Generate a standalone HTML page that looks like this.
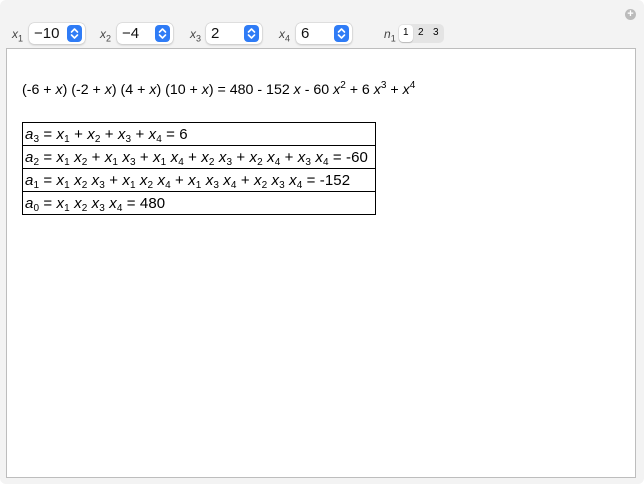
<!DOCTYPE html><html><head><style>
body{margin:0;width:644px;height:486px;background:#fff;font-family:"Liberation Sans",sans-serif;position:relative;overflow:hidden}
.outer{position:absolute;left:0;top:0;width:644px;height:484px;background:#f3f3f3;border-radius:6px}
.panel{position:absolute;left:6px;top:48px;width:630px;height:430px;background:#fff;border:1px solid #bdbdbd;box-sizing:border-box}
.lab{position:absolute;top:27px;font-size:12px;font-style:italic;color:#444}
.lab sub{font-size:9px;font-style:normal}
.pop{position:absolute;top:23px;height:21px;width:56px;background:#fff;border-radius:5px;box-shadow:0 0 0 .5px #ccc,0 1px 2px rgba(0,0,0,.2);font-size:15px;line-height:21px;padding-left:5px;box-sizing:border-box;color:#111}
.st{position:absolute;right:3px;top:2px;width:15px;height:17px;background:#2f7cf6;border-radius:4px}
.seg{position:absolute;left:398px;top:24px;width:46px;height:19px;background:#e4e4e4;border-radius:5px;font-size:10px}
.seg span{position:absolute;top:3px}
.eq{position:absolute;left:22px;top:82px;font-size:14.2px;color:#000;white-space:nowrap}
i{font-style:italic}
sup{font-size:10px;vertical-align:6px;line-height:0}
.eq sub,table sub{font-size:10px;vertical-align:-3px;line-height:0}
table{position:absolute;left:22px;top:122px;border-collapse:collapse;width:354px;font-size:15px}
td{border:1px solid #000;height:22px;padding:0 0 0 2px;white-space:nowrap;line-height:21px;letter-spacing:.1px}
</style></head><body>
<div class="outer"></div>
<div style="position:absolute;left:625px;top:9px;width:11px;height:11px;border-radius:50%;background:#bbb;color:#fff;font-size:11px;line-height:11px;text-align:center;font-weight:bold">+</div>
<svg width="0" height="0" style="position:absolute"><defs><g id="ar"><path d="M4.5 7 L7.5 4 L10.5 7 M4.5 10 L7.5 13 L10.5 10" stroke="#fff" stroke-width="1.6" fill="none" stroke-linecap="round" stroke-linejoin="round"/></g></defs></svg>
<div class="lab" style="left:12px">x<sub>1</sub></div>
<div class="pop" style="left:29px">−10<svg class="st" viewBox="0 0 15 17"><use href="#ar"/></svg></div>
<div class="lab" style="left:100px">x<sub>2</sub></div>
<div class="pop" style="left:117px">−4<svg class="st" viewBox="0 0 15 17"><use href="#ar"/></svg></div>
<div class="lab" style="left:190px">x<sub>3</sub></div>
<div class="pop" style="left:206px">2<svg class="st" viewBox="0 0 15 17"><use href="#ar"/></svg></div>
<div class="lab" style="left:279px">x<sub>4</sub></div>
<div class="pop" style="left:296px">6<svg class="st" viewBox="0 0 15 17"><use href="#ar"/></svg></div>
<div class="lab" style="left:384px">n<sub>1</sub></div>
<div class="seg"><div style="position:absolute;left:1px;top:1px;width:14px;height:17px;background:#fff;border-radius:4px;box-shadow:0 1px 1px rgba(0,0,0,.2)"></div><span style="left:5px">1</span><span style="left:20px">2</span><span style="left:35px">3</span></div>
<div class="panel"></div>
<div class="eq">(-6 + <i>x</i>) (-2 + <i>x</i>) (4 + <i>x</i>) (10 + <i>x</i>) = 480 - 152 <i>x</i> - 60 <i>x</i><sup>2</sup> + 6 <i>x</i><sup>3</sup> + <i>x</i><sup>4</sup></div>
<table>
<tr><td><i>a</i><sub>3</sub> = <i>x</i><sub>1</sub> + <i>x</i><sub>2</sub> + <i>x</i><sub>3</sub> + <i>x</i><sub>4</sub> = 6</td></tr>
<tr><td><i>a</i><sub>2</sub> = <i>x</i><sub>1</sub> <i>x</i><sub>2</sub> + <i>x</i><sub>1</sub> <i>x</i><sub>3</sub> + <i>x</i><sub>1</sub> <i>x</i><sub>4</sub> + <i>x</i><sub>2</sub> <i>x</i><sub>3</sub> + <i>x</i><sub>2</sub> <i>x</i><sub>4</sub> + <i>x</i><sub>3</sub> <i>x</i><sub>4</sub> = -60</td></tr>
<tr><td><i>a</i><sub>1</sub> = <i>x</i><sub>1</sub> <i>x</i><sub>2</sub> <i>x</i><sub>3</sub> + <i>x</i><sub>1</sub> <i>x</i><sub>2</sub> <i>x</i><sub>4</sub> + <i>x</i><sub>1</sub> <i>x</i><sub>3</sub> <i>x</i><sub>4</sub> + <i>x</i><sub>2</sub> <i>x</i><sub>3</sub> <i>x</i><sub>4</sub> = -152</td></tr>
<tr><td><i>a</i><sub>0</sub> = <i>x</i><sub>1</sub> <i>x</i><sub>2</sub> <i>x</i><sub>3</sub> <i>x</i><sub>4</sub> = 480</td></tr>
</table>
</body></html>
